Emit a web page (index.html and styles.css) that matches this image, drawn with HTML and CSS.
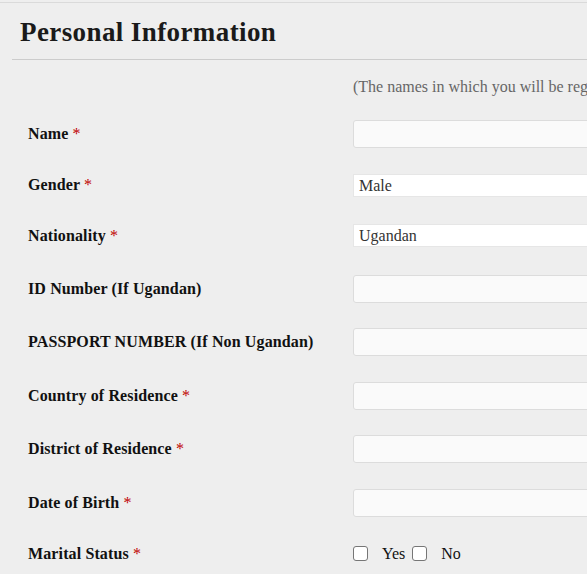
FILE: index.html
```html
<!DOCTYPE html>
<html>
<head>
<meta charset="utf-8">
<link rel="stylesheet" href="styles.css">
</head>
<body>
<div class="page">
  <div class="panel">
    <div class="panel-head"><h2>Personal Information</h2></div>
    <form class="form">
      <div class="hint">(The names in which you will be registered as appearing on your documents)</div>
      <div class="row">
        <label class="lbl">Name <span class="req">*</span></label>
        <input class="ctl inp" type="text">
      </div>
      <div class="row sel-row">
        <label class="lbl">Gender <span class="req">*</span></label>
        <select class="ctl sel"><option>Male</option><option>Female</option></select>
      </div>
      <div class="row sel-row">
        <label class="lbl">Nationality <span class="req">*</span></label>
        <select class="ctl sel"><option>Ugandan</option></select>
      </div>
      <div class="row">
        <label class="lbl">ID Number (If Ugandan)</label>
        <input class="ctl inp" type="text">
      </div>
      <div class="row">
        <label class="lbl">PASSPORT NUMBER (If Non Ugandan)</label>
        <input class="ctl inp" type="text">
      </div>
      <div class="row">
        <label class="lbl">Country of Residence <span class="req">*</span></label>
        <input class="ctl inp" type="text">
      </div>
      <div class="row">
        <label class="lbl">District of Residence <span class="req">*</span></label>
        <input class="ctl inp" type="text">
      </div>
      <div class="row">
        <label class="lbl">Date of Birth <span class="req">*</span></label>
        <input class="ctl inp" type="text">
      </div>
      <div class="row check-row">
        <label class="lbl">Marital Status <span class="req">*</span></label>
        <div class="checks">
          <input class="cb" type="checkbox"><span class="cb-text">Yes</span>
          <input class="cb" type="checkbox"><span class="cb-text">No</span>
        </div>
      </div>
    </form>
  </div>
</div>
</body>
</html>
```

FILE: styles.css
```css
html, body {
  margin: 0;
  padding: 0;
  background: #eeeeee;
  overflow: hidden;
}
body {
  font-family: "Liberation Serif", "Times New Roman", serif;
  color: #111;
}
.page {
  margin-top: 2px;
  border-top: 1px solid #dadada;
  height: 571px;
  overflow: hidden;
}
.panel {
  margin-left: 12px;
  width: 900px;
}
.panel-head {
  padding: 13px 0 11px 8px;
  border-bottom: 1px solid #cccccc;
}
.panel-head h2 {
  margin: 0;
  font-size: 27px;
  line-height: 32px;
  font-weight: bold;
  letter-spacing: 0.4px;
  color: #1a1a1a;
}
.form {
  padding: 18px 0 0 16px;
}
.hint {
  margin-left: 325px;
  font-size: 16px;
  line-height: 18px;
  color: #666;
  white-space: nowrap;
  margin-bottom: 24px;
}
.row {
  display: flex;
  align-items: center;
  height: 28px;
  margin-bottom: 25.5px;
}
.row.sel-row {
  height: 23px;
  margin-bottom: 27.5px;
}
.row.check-row {
  height: 23px;
  margin-bottom: 0;
}
.lbl {
  width: 325px;
  flex: none;
  font-size: 16px;
  font-weight: bold;
  line-height: 18px;
  letter-spacing: 0.12px;
  color: #111;
}
.req {
  color: #c00000;
  font-weight: normal;
}
.ctl {
  box-sizing: border-box;
  width: 420px;
  flex: none;
  margin: 0;
  font-family: "Liberation Serif", "Times New Roman", serif;
  font-size: 16px;
  color: #333;
}
.inp {
  height: 28px;
  background: #fafafa;
  border: 1px solid #dcdcdc;
  border-radius: 3px;
  padding: 0 6px;
}
.sel {
  height: 23px;
  background: #ffffff;
  border: 1px solid #e6e6e6;
  border-radius: 0;
  padding: 0 0 0 5px;
  appearance: none;
  -webkit-appearance: none;
  line-height: 21px;
}
.checks {
  display: flex;
  align-items: center;
  font-size: 16px;
  color: #111;
}
.cb {
  appearance: none;
  -webkit-appearance: none;
  box-sizing: border-box;
  width: 15px;
  height: 15px;
  margin: 0;
  border: 1px solid #767676;
  border-radius: 3px;
  background: #fff;
}
.cb-text {
  margin-left: 14px;
  margin-right: 7px;
}
```
